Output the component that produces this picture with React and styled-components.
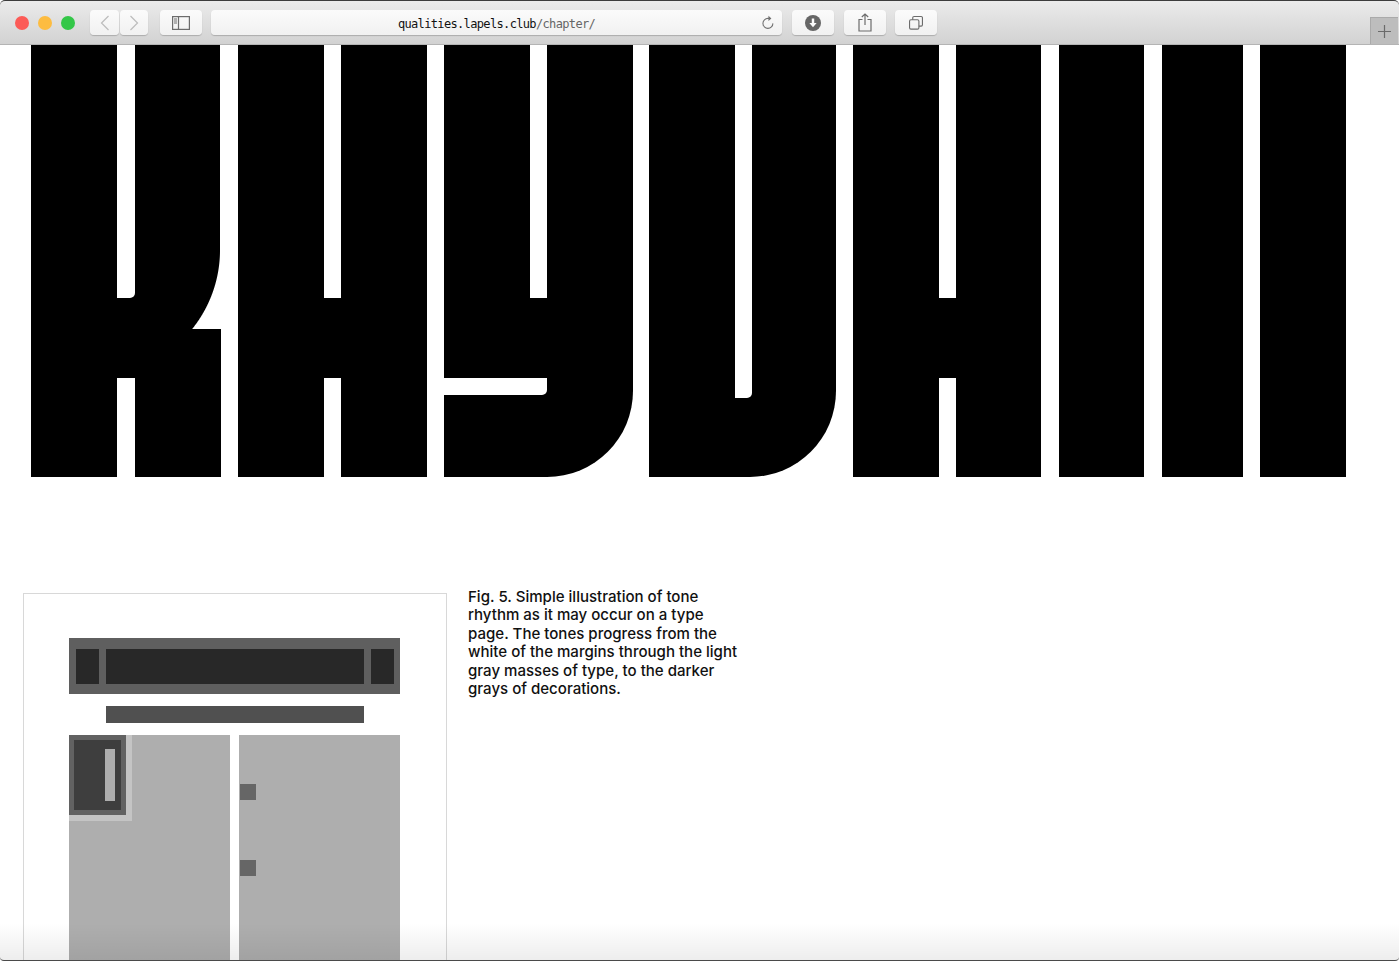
import React from "react";
import styled, { createGlobalStyle } from "styled-components";

const Global = createGlobalStyle`
  html, body { margin: 0; padding: 0; background: #fff; overflow: hidden; }
  #root { height: 961px; }
`;

const Win = styled.div`
  position: relative;
  width: 1399px;
  height: 961px;
  overflow: hidden;
  background: #fff;
  display: flex;
  flex-direction: column;
`;

const Toolbar = styled.header`
  position: relative;
  flex: none;
  height: 45px;
  box-sizing: border-box;
  display: flex;
  align-items: flex-start;
  padding: 9px 0 0 15px;
  border-top: 1px solid #3c3c3c;
  border-bottom: 1px solid #b4b4b4;
  border-radius: 5px 5px 0 0;
  background: linear-gradient(#ebebeb, #d2d2d2);
`;

const Lights = styled.div`
  display: flex;
  gap: 9px;
  margin: 6px 15px 0 0;
`;

const Light = styled.span`
  width: 14px;
  height: 14px;
  border-radius: 50%;
  background: ${(p) => p.$c};
`;

const Btn = styled.div`
  box-sizing: border-box;
  width: ${(p) => p.$w}px;
  height: 25px;
  margin-right: ${(p) => p.$mr || 0}px;
  display: flex;
  align-items: center;
  justify-content: center;
  border-radius: 4px;
  background: linear-gradient(#fbfbfb, #f1f1f1);
  box-shadow: 0 1px 1px rgba(0, 0, 0, 0.2);
  color: #6c6c6c;
`;

const Address = styled.div`
  position: relative;
  box-sizing: border-box;
  width: 571px;
  height: 25px;
  margin-right: 10px;
  padding-top: 3px;
  border-radius: 4px;
  background: linear-gradient(#fbfbfb, #f1f1f1);
  box-shadow: 0 1px 1px rgba(0, 0, 0, 0.2);
  display: flex;
  align-items: center;
  justify-content: center;
  font: 12px/22px "DejaVu Sans Mono", monospace;
  letter-spacing: -0.65px;
  color: #111;
`;

const Path = styled.span`
  color: #666;
`;

const Reload = styled.svg`
  position: absolute;
  right: 7px;
  top: 5px;
  color: #707070;
`;

const NewTab = styled.div`
  position: absolute;
  right: 1px;
  bottom: 0;
  width: 28px;
  height: 27px;
  box-sizing: border-box;
  border-left: 1px solid #aaa;
  border-top: 1px solid #aaa;
  background: #bdbdbd;
  display: flex;
  align-items: center;
  justify-content: center;
  color: #6a6a6a;
`;

const Page = styled.main`
  flex: 1;
  min-height: 0;
  overflow: hidden;
`;

const Headline = styled.div`
  display: flex;
  height: 432px;
  padding-left: 31px;
`;

const Glyph = styled.div`
  position: relative;
  flex: none;
  width: ${(p) => p.$w}px;
  margin-right: ${(p) => p.$gap ?? 17}px;
  height: 100%;
  background: #000;
  border-bottom-right-radius: ${(p) => (p.$round ? "86px" : "0")};
`;

const Slot = styled.span`
  position: absolute;
  left: ${(p) => p.$x}px;
  top: ${(p) => p.$y}px;
  width: ${(p) => p.$w}px;
  height: ${(p) => p.$h}px;
  background: #fff;
  border-bottom-right-radius: ${(p) => p.$r || 0}px;
`;

const Notch = styled.span`
  position: absolute;
  right: 0;
  top: 205px;
  width: 31px;
  height: 79px;
  background: radial-gradient(circle at -96px 0, #000 125.5px, #fff 126.5px);
`;

const Lower = styled.section`
  display: flex;
  align-items: flex-start;
  margin: 116px 0 0 23px;
`;

const Figure = styled.figure`
  flex: none;
  box-sizing: border-box;
  width: 424px;
  height: 420px;
  margin: 0 21px 0 0;
  padding: 44px 46px 0 45px;
  border: 1px solid #d8d8d8;
`;

const Masthead = styled.div`
  box-sizing: border-box;
  height: 56px;
  padding: 11px 6px 10px 7px;
  display: flex;
  gap: 7px;
  background: #5f5f5f;
`;

const Mast = styled.span`
  flex: ${(p) => (p.$wide ? "1" : "none")};
  width: ${(p) => (p.$wide ? "auto" : "23px")};
  background: #282828;
`;

const Subhead = styled.div`
  height: 17px;
  margin: 12px 36px 12px 37px;
  background: #505050;
`;

const Columns = styled.div`
  display: flex;
  gap: 9px;
`;

const Column = styled.div`
  position: relative;
  flex: none;
  width: 161px;
  height: 300px;
  background: #aeaeae;
`;

const Halo = styled.div`
  position: absolute;
  left: 0;
  top: 0;
  width: 57px;
  height: 80px;
  box-sizing: border-box;
  padding: 5px;
  background: #626262;
  box-shadow: 6px 0 0 #c4c4c4, 0 6px 0 #c4c4c4, 6px 6px 0 #c4c4c4;
`;

const Plate = styled.div`
  height: 100%;
  display: flex;
  justify-content: flex-end;
  padding: 9px 6px 9px 0;
  box-sizing: border-box;
  background: #3e3e3e;
`;

const Strip = styled.span`
  width: 10px;
  background: #aeaeae;
`;

const Ornament = styled.span`
  position: absolute;
  left: 1px;
  top: ${(p) => p.$y}px;
  width: 16px;
  height: 16px;
  background: #666;
`;

const Caption = styled.p`
  width: 280px;
  margin: -5px 0 0;
  font: 500 15.05px/18.4px Inter, "Liberation Sans", sans-serif;
  color: #111;
`;

const Fade = styled.div`
  position: absolute;
  left: 0;
  right: 0;
  bottom: 0;
  height: 38px;
  box-sizing: border-box;
  background: linear-gradient(rgba(0, 0, 0, 0), rgba(0, 0, 0, 0.07));
  border-bottom: 1px solid #4a4a4a;
  border-radius: 0 0 4px 4px;
  pointer-events: none;
`;

const Ic = { fill: "none", stroke: "currentColor", strokeWidth: 1.2 };

export default function App() {
  return (
    <Win>
      <Global />
      <Toolbar>
        <Lights>
          <Light $c="#fc5b57" />
          <Light $c="#fdbc40" />
          <Light $c="#33c748" />
        </Lights>
        <Btn $w={29} $mr={1}>
          <svg width="10" height="16" viewBox="0 0 10 16" {...Ic} stroke="#bcbcbc"><path d="M8.5 1 1.500 8l7 7" /></svg>
        </Btn>
        <Btn $w={28} $mr={12}>
          <svg width="10" height="16" viewBox="0 0 10 16" {...Ic} stroke="#bcbcbc"><path d="M1.500 1l7 7-7 7" /></svg>
        </Btn>
        <Btn $w={42} $mr={9}>
          <svg width="18" height="14" viewBox="0 0 18 14" {...Ic}><rect x=".6" y=".6" width="16.8" height="12.8" /><path d="M6.5 .6v12.8" /><path d="M2 3h3M2 5h3M2 7h3" strokeWidth="1" /></svg>
        </Btn>
        <Address>
          <span>qualities.lapels.club<Path>/chapter/</Path></span>
          <Reload width="14" height="15" viewBox="0 0 16 17" {...Ic}>
            <path d="M13.6 9.500A5.700 5.700 0 1 1 8 3.800h2" />
            <path d="M8.500 .8l3.400 3-3.400 3z" fill="currentColor" stroke="none" />
          </Reload>
        </Address>
        <Btn $w={42} $mr={10}>
          <svg width="16" height="16" viewBox="0 0 17 17"><circle cx="8.500" cy="8.500" r="8.500" fill="#666" /><path d="M7.200 3.800h2.600v4.600h2.600L8.500 13 4.600 8.400h2.600z" fill="#fbfbfb" /></svg>
        </Btn>
        <Btn $w={42} $mr={9}>
          <svg width="14" height="19" viewBox="0 0 14 19" {...Ic}><path d="M4.500 6.500H1v11.500h12V6.500H9.500" /><path d="M7 12V1M3.800 4 7 1l3.200 3" /></svg>
        </Btn>
        <Btn $w={42}>
          <svg width="14" height="14" viewBox="0 0 15 15" {...Ic}><rect x=".6" y="4" width="10" height="10" rx="1.500" /><path d="M4 4V2a1.400 1.400 0 0 1 1.400-1.400h7.500A1.400 1.400 0 0 1 14.400 2v7.500a1.400 1.400 0 0 1-1.400 1.400h-2.400" /></svg>
        </Btn>
        <NewTab>
          <svg width="13" height="13" viewBox="0 0 13 13" {...Ic}><path d="M6.500 0v13M0 6.500h13" /></svg>
        </NewTab>
      </Toolbar>
      <Page>
        <Headline role="img" aria-label="Rhythm">
          <Glyph $w={190}>
            <Slot $x={86} $y={0} $w={18} $h={253} $r={5} />
            <Slot $x={86} $y={333} $w={18} $h={99} />
            <Slot $x={189} $y={0} $w={1} $h={205} />
            <Notch />
          </Glyph>
          <Glyph $w={189}>
            <Slot $x={86} $y={0} $w={17} $h={253} />
            <Slot $x={86} $y={333} $w={17} $h={99} />
          </Glyph>
          <Glyph $w={189} $round $gap={16}>
            <Slot $x={86} $y={0} $w={17} $h={253} />
            <Slot $x={0} $y={333} $w={103} $h={17} $r={5} />
          </Glyph>
          <Glyph $w={187} $round>
            <Slot $x={86} $y={0} $w={17} $h={353} $r={5} />
          </Glyph>
          <Glyph $w={188} $gap={18}>
            <Slot $x={86} $y={0} $w={17} $h={253} />
            <Slot $x={86} $y={333} $w={17} $h={99} />
          </Glyph>
          <Glyph $w={85} $gap={18} />
          <Glyph $w={81} />
          <Glyph $w={86} />
        </Headline>
        <Lower>
          <Figure>
            <Masthead>
              <Mast />
              <Mast $wide />
              <Mast />
            </Masthead>
            <Subhead />
            <Columns>
              <Column>
                <Halo><Plate><Strip /></Plate></Halo>
              </Column>
              <Column>
                <Ornament $y={49} />
                <Ornament $y={125} />
              </Column>
            </Columns>
          </Figure>
          <Caption>
            Fig. 5. Simple illustration of tone rhythm as it may occur on a type page. The tones progress from the white of the margins through the light gray masses of type, to the darker grays of decorations.
          </Caption>
        </Lower>
      </Page>
      <Fade />
    </Win>
  );
}
